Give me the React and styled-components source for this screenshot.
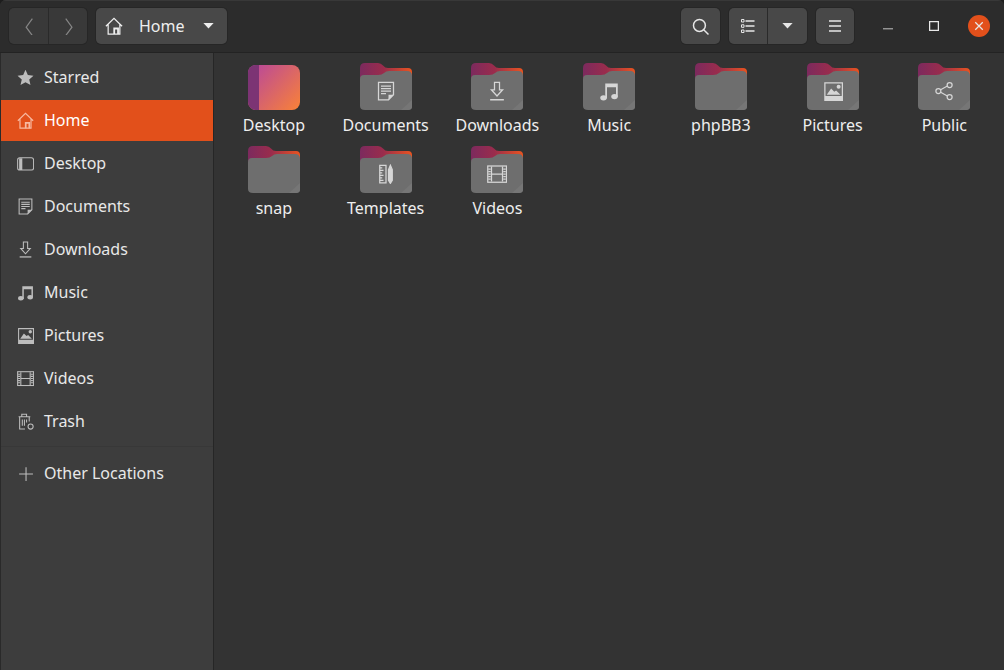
import React from 'react'
import styled, { createGlobalStyle } from 'styled-components'

const GlobalStyle = createGlobalStyle`
  html, body {
    margin: 0;
    padding: 0;
    background: #1d1d1d;
  }
  #root {
    width: 1004px;
    height: 670px;
  }
`

const Window = styled.div`
  width: 1004px;
  height: 670px;
  display: flex;
  flex-direction: column;
  overflow: hidden;
  border-radius: 6px 6px 0 0;
  background: #333333;
  color: #eeeeee;
  font-family: "Noto Sans", sans-serif;
  font-size: 16px;
`
const HeaderBar = styled.header`
  height: 52px;
  flex: none;
  box-sizing: border-box;
  padding: 8px 14px 8px 9px;
  display: flex;
  align-items: flex-start;
  gap: 9px;
  background: #2c2c2c;
  border-top: 1px solid #383838;
`
const ButtonGroup = styled.div`
  display: flex;
  height: 36px;
  margin-top: -1px;
  border-radius: 5px;
  overflow: hidden;
  box-shadow: 0 0 0 1px #262626;
`
const ToolButton = styled.button`
  width: ${p => p.$width || 39}px;
  height: 36px;
  box-sizing: border-box;
  padding: 0;
  border: 0;
  border-left: ${p => (p.$divided ? '1px solid #2a2a2a' : '0')};
  background: ${p => (p.$disabled ? '#393939' : '#484848')};
  color: ${p => (p.$disabled ? '#858585' : '#e6e6e6')};
  display: flex;
  align-items: center;
  justify-content: center;
`
const PathButton = styled(ToolButton)`
  width: 131px;
  justify-content: flex-start;
  padding-left: 9px;
  color: #eeeeee;
  font: inherit;
`
const PathLabel = styled.span`
  margin: 0 18px 0 16px;
`
const Spacer = styled.div`
  flex: 1;
`
const WindowControls = styled.div`
  display: flex;
  align-items: center;
  height: 36px;
  margin-top: -1px;
  margin-left: 14px;
  gap: 23.5px;
`
const ControlSlot = styled.div`
  width: 22px;
  height: 22px;
  display: flex;
  align-items: center;
  justify-content: center;
  border-radius: 50%;
  background: ${p => (p.$close ? '#e2501b' : 'transparent')};
  color: #e8e8e8;
`
const Body = styled.div`
  flex: 1;
  display: flex;
  min-height: 0;
  border-top: 1px solid #232323;
`
const Sidebar = styled.nav`
  width: 214px;
  flex: none;
  box-sizing: border-box;
  padding-top: 4px;
  background: #3d3d3d;
  border-left: 1px solid #2a2a2a;
  border-right: 1px solid #262626;
`
const PlaceRow = styled.div`
  height: 41px;
  box-sizing: border-box;
  margin-bottom: 2px;
  padding: 0 0 1px 16px;
  display: flex;
  align-items: center;
  gap: 10px;
  background: ${p => (p.$active ? '#e2501b' : 'transparent')};
  color: ${p => (p.$active ? '#ffffff' : '#e8e8e8')};
`
const PlaceIcon = styled.span`
  width: 17px;
  height: 17px;
  display: flex;
  color: ${p => (p.$active ? '#f7b9a2' : '#bdbdbd')};

  svg {
    width: 17px;
    height: 17px;
  }
`
const Separator = styled.div`
  height: 1px;
  margin: 4px 0 6px;
  background: #383838;
`
const FileGrid = styled.main`
  flex: 1;
  display: grid;
  grid-template-columns: repeat(7, 111.75px);
  grid-auto-rows: 83px;
  align-content: start;
  padding: 9px 0 0 4px;
`
const FileItem = styled.div`
  display: flex;
  flex-direction: column;
  align-items: center;
`
const IconFrame = styled.div`
  width: 52px;
  height: 48px;
  position: relative;
  margin-top: 1px;
`
const Glyph = styled.div`
  position: absolute;
  left: 16px;
  top: 18px;
  width: 20px;
  height: 20px;
  color: #d6d6d6;

  svg {
    width: 20px;
    height: 20px;
  }
`
const FileName = styled.span`
  margin-top: 3px;
  line-height: 22px;
  color: #eeeeee;
  white-space: nowrap;
`

const Svg = ({ size = 16, children, fill = 'none', stroke = 'currentColor', sw = 1, vb = 16 }) => (
  <svg width={size} height={size} viewBox={`0 0 ${vb} ${vb}`} fill={fill} stroke={stroke} strokeWidth={sw}>
    {children}
  </svg>
)

const HomeIcon = ({ size = 17 }) => (
  <Svg size={size} sw={1.1}>
    <path d="M.8 8.2 8 1.2l7.2 7M2.8 6.6v8.6h10.4V6.6" />
    <path d="M8.2 15.2v-5h3.4v5" strokeWidth="1.6" />
  </Svg>
)
const StarIcon = () => (
  <Svg fill="currentColor" stroke="none">
    <path d="M8 .8l2.2 4.9 5.3.6-4 3.5 1.2 5.3L8 12.4l-4.7 2.7 1.2-5.3-4-3.5 5.3-.6z" />
  </Svg>
)
const DesktopIcon = () => (
  <Svg>
    <rect x=".6" y="2.6" width="15" height="11.6" rx="2" />
    <path d="M2 3h3v11H2z" fill="currentColor" stroke="none" />
  </Svg>
)
const DocumentIcon = () => (
  <Svg>
    <path d="M2 1h12v10l-4 4H2z" />
    <path d="M4 4h8M4 6h8M4 8h8M4 10h4" />
    <path d="M14 11h-4v4z" fill="currentColor" stroke="none" />
  </Svg>
)
const DownloadIcon = () => (
  <Svg>
    <path d="M6 1h4v6h2.5L8 12 3.5 7H6z" />
    <path d="M2.5 15h11" strokeWidth="1.2" />
  </Svg>
)
const MusicIcon = () => (
  <Svg fill="currentColor" stroke="none">
    <path d="M5 2h10v10.5h-1.4V5H6.4v9H5z" />
    <ellipse cx="3.6" cy="13.4" rx="2.6" ry="2.1" />
    <ellipse cx="12.4" cy="12.4" rx="2.6" ry="2.1" />
  </Svg>
)
const PictureIcon = () => (
  <Svg fill="currentColor" stroke="none">
    <path fillRule="evenodd" d="M1 1h15v15H1zM2 2v10h13V2z" />
    <path d="M3 11l3.5-5L9 8.5l1.5-1L14 11z" />
    <circle cx="12.5" cy="4.5" r="1.6" />
  </Svg>
)
const VideoIcon = () => (
  <Svg>
    <rect x=".6" y="1.6" width="15" height="13" />
    <path d="M3.6 2v12M12.4 2v12M4 8h8" />
    <path d="M1 4h2M1 6h2M1 8h2M1 10h2M1 12h2M13 4h2M13 6h2M13 8h2M13 10h2M13 12h2" />
  </Svg>
)
const TrashIcon = () => (
  <Svg>
    <path d="M1.5 3.5h11M4.5 3V1.2h4.5V3M2.5 4v11h5M11.5 4v4" />
    <path d="M5 6v6M7 6v6M9 6v3" />
    <circle cx="12.8" cy="12.8" r="2.4" />
  </Svg>
)
const PlusIcon = () => (
  <Svg>
    <path d="M8.5 2v13M2 8.5h13" />
  </Svg>
)
const ShareIcon = () => (
  <Svg>
    <circle cx="3.5" cy="8" r="2" />
    <circle cx="12.5" cy="3.2" r="2" />
    <circle cx="12.5" cy="12.8" r="2" />
    <path d="M5.3 7l5.4-3M5.3 9l5.4 3" />
  </Svg>
)
const TemplateIcon = () => (
  <Svg sw={1}>
    <path d="M3 1h5v14H3z" />
    <path d="M3 3h2M3 5h3M3 7h2M3 9h3M3 11h2M3 13h3" />
    <path d="M10 4.5 11.5 1 13 4.5V13l-1.5 2.5L10 13z" fill="currentColor" />
  </Svg>
)
const Caret = () => (
  <svg width="11" height="6" viewBox="0 0 12 7" fill="currentColor">
    <path d="M0 0h12L6 6.5z" />
  </svg>
)

const FolderShape = ({ id }) => (
  <svg width="52" height="48" viewBox="0 0 52 48">
    <defs>
      <linearGradient id={`back${id}`} x1="0" x2="1" y1="0" y2="0">
        <stop offset="0" stopColor="#7c2a5e" />
        <stop offset="0.45" stopColor="#9a2c4c" />
        <stop offset="1" stopColor="#e95420" />
      </linearGradient>
    </defs>
    <path d="M0 12V5q0-5 5-5h13q3 0 5 2.5T28 5h20q4 0 4 4v10H0z" fill={`url(#back${id})`} />
    <path d="M0 16q0-4 4-4h14q4 0 6-2t5-2h18q5 0 5 5v30q0 4-5 4H5q-5 0-5-4z" fill="#6e6e6e" />
    <path d="M52 37v7q0 3-4 3H41z" fill="#767676" />
  </svg>
)
const DesktopFolder = () => (
  <svg width="52" height="46" viewBox="0 0 52 46" style={{ marginTop: 2 }}>
    <defs>
      <linearGradient id="desk" x1="0" x2="1" y1="0.1" y2="0.9">
        <stop offset="0" stopColor="#b8479c" />
        <stop offset="1" stopColor="#f67f3c" />
      </linearGradient>
      <clipPath id="deskClip">
        <rect width="52" height="45" rx="8" />
      </clipPath>
    </defs>
    <g clipPath="url(#deskClip)">
      <rect width="52" height="45" fill="url(#desk)" />
      <rect width="11" height="45" fill="#7c3474" />
    </g>
  </svg>
)

const places = [
  { name: 'Starred', Icon: StarIcon },
  { name: 'Home', Icon: HomeIcon, active: true },
  { name: 'Desktop', Icon: DesktopIcon },
  { name: 'Documents', Icon: DocumentIcon },
  { name: 'Downloads', Icon: DownloadIcon },
  { name: 'Music', Icon: MusicIcon },
  { name: 'Pictures', Icon: PictureIcon },
  { name: 'Videos', Icon: VideoIcon },
  { name: 'Trash', Icon: TrashIcon },
]

const files = [
  { name: 'Desktop', desktop: true },
  { name: 'Documents', Icon: DocumentIcon },
  { name: 'Downloads', Icon: DownloadIcon },
  { name: 'Music', Icon: MusicIcon },
  { name: 'phpBB3' },
  { name: 'Pictures', Icon: PictureIcon },
  { name: 'Public', Icon: ShareIcon },
  { name: 'snap' },
  { name: 'Templates', Icon: TemplateIcon },
  { name: 'Videos', Icon: VideoIcon },
]

export default function App() {
  return (
    <Window>
      <GlobalStyle />
      <HeaderBar>
        <ButtonGroup>
          <ToolButton $disabled>
            <Svg size={18} sw={1.1}><path d="M11 1.5 5.5 9l5.5 7.5" /></Svg>
          </ToolButton>
          <ToolButton $disabled $divided>
            <Svg size={18} sw={1.1}><path d="M6 1.5 11.5 9 6 16.5" /></Svg>
          </ToolButton>
        </ButtonGroup>
        <ButtonGroup>
          <PathButton as="div">
            <HomeIcon size={18} />
            <PathLabel>Home</PathLabel>
            <Caret />
          </PathButton>
        </ButtonGroup>
        <Spacer />
        <ButtonGroup>
          <ToolButton>
            <Svg size={17} sw={1.4}>
              <circle cx="7" cy="7" r="5.6" />
              <path d="M11 11l4.5 4.5" />
            </Svg>
          </ToolButton>
        </ButtonGroup>
        <ButtonGroup>
          <ToolButton $width={38}>
            <Svg size={16}>
              <path d="M5.5 3h9M5.5 8h9M5.5 13h9" strokeWidth="1.3" />
              <path d="M1.5 1.5h2.5v2.5H1.5zM1.5 6.8h2.5v2.5H1.5zM1.5 12h2.5v2.5H1.5z" />
            </Svg>
          </ToolButton>
          <ToolButton $width={40} $divided>
            <Caret />
          </ToolButton>
        </ButtonGroup>
        <ButtonGroup>
          <ToolButton $width={38}>
            <Svg size={16} sw={1.3}><path d="M2 3h12M2 8h12M2 13h12" /></Svg>
          </ToolButton>
        </ButtonGroup>
        <WindowControls>
          <ControlSlot>
            <Svg size={10} sw={1.3}><path d="M0 12.5h16" /></Svg>
          </ControlSlot>
          <ControlSlot>
            <Svg size={10} sw={2}><rect x="1" y="1" width="14" height="14" /></Svg>
          </ControlSlot>
          <ControlSlot $close>
            <Svg size={10} sw={2}><path d="M2 2l12 12M14 2 2 14" /></Svg>
          </ControlSlot>
        </WindowControls>
      </HeaderBar>
      <Body>
        <Sidebar>
          {places.map(({ name, Icon, active }) => (
            <PlaceRow key={name} $active={active}>
              <PlaceIcon $active={active}><Icon /></PlaceIcon>
              {name}
            </PlaceRow>
          ))}
          <Separator />
          <PlaceRow>
            <PlaceIcon><PlusIcon /></PlaceIcon>
            Other Locations
          </PlaceRow>
        </Sidebar>
        <FileGrid>
          {files.map(({ name, Icon, desktop }) => (
            <FileItem key={name}>
              <IconFrame>
                {desktop ? <DesktopFolder /> : <FolderShape id={name} />}
                {Icon && <Glyph><Icon /></Glyph>}
              </IconFrame>
              <FileName>{name}</FileName>
            </FileItem>
          ))}
        </FileGrid>
      </Body>
    </Window>
  )
}
